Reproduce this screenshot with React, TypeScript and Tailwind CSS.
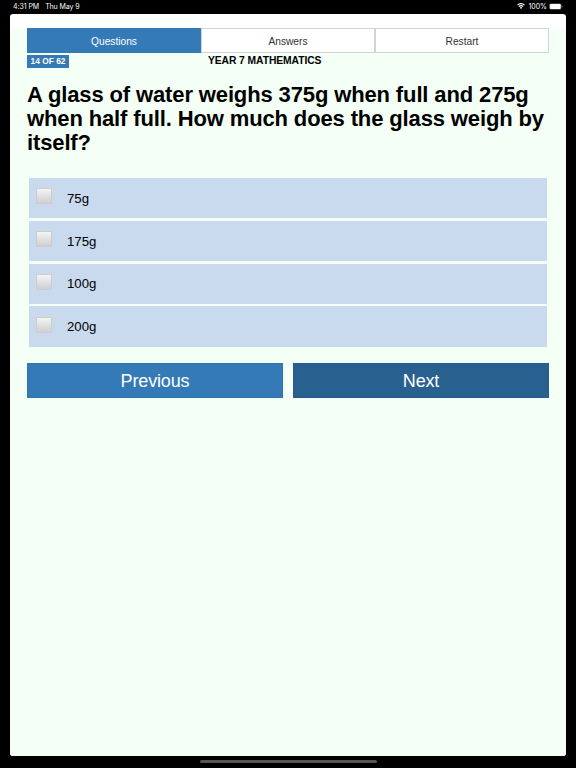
import { useState } from 'react';

const TABS = ['Questions', 'Answers', 'Restart'];

const OPTIONS = ['75g', '175g', '100g', '200g'];

function WifiIcon() {
  return (
    <svg viewBox="0 0 16 12" className="w-[8px] h-[6px]" fill="none" stroke="#fff" strokeWidth="2.4">
      <path d="M1 4.2a10 10 0 0 1 14 0" />
      <path d="M3.7 7.2a6.2 6.2 0 0 1 8.6 0" />
      <path d="M8 11.8L5.6 9.4a3.2 3.2 0 0 1 4.8 0z" fill="#fff" stroke="none" />
    </svg>
  );
}

function BatteryIcon() {
  return (
    <svg viewBox="0 0 14 7" className="w-[14px] h-[7px]">
      <rect x="0.3" y="0.5" width="12" height="6" rx="1.7" fill="none" stroke="#777" strokeWidth="0.5" />
      <rect x="0.8" y="1" width="11" height="5" rx="1.2" fill="#fff" />
      <path d="M13 2.5v2q.8-.4.8-1t-.8-1z" fill="#777" />
    </svg>
  );
}

export default function App() {
  const [tab, setTab] = useState('Questions');
  const [checked, setChecked] = useState('');

  return (
    <div className="h-[768px] w-[576px] overflow-hidden bg-black flex flex-col text-black font-['Liberation_Sans',Arial,sans-serif]">

      {/* status bar */}
      <div className="h-[14px] shrink-0 flex items-start justify-between pl-[13px] pr-[13px] text-white text-[7px] leading-[13px] font-['Inter',sans-serif]">
        <div className="flex gap-[6px]">
          <span className="tracking-[-0.05px]">4:31 PM</span>
          <span className="tracking-[-0.1px]">Thu May 9</span>
        </div>
        <div className="flex items-center h-[12px]">
          <WifiIcon />
          <span className="ml-[3px] mr-[2px]">100%</span>
          <BatteryIcon />
        </div>
      </div>

      {/* page */}
      <div className="ml-[10px] w-[556px] h-[742px] shrink-0 rounded-[3px] bg-white overflow-hidden flex flex-col">
        <div className="h-[14px] shrink-0" />
        <div className="flex-1 bg-[#f4fff5] px-[17px]">

          <div className="grid grid-cols-3 h-[25px]">
            {TABS.map(name => (
              <button
                key={name}
                onClick={() => setTab(name)}
                className={
                  tab === name
                    ? 'bg-[#337ab7] text-white text-[10.2px] pt-[2px] border border-[#337ab7]'
                    : 'bg-white text-[#333] text-[10.2px] pt-[2px] border border-[#d3d3d3]'
                }
              >
                {name}
              </button>
            ))}
          </div>

          <div className="flex items-start h-[16px]">
            <span className="mt-[2px] w-[42px] h-[13px] bg-[#337ab7] text-white text-[8.4px] leading-[13px] font-bold text-center whitespace-nowrap">
              14 OF 62
            </span>
            <span className="ml-[139px] text-[10.3px] leading-[15px] tracking-[-0.07px] font-bold whitespace-nowrap">YEAR 7 MATHEMATICS</span>
          </div>

          <h1 className="mt-[14px] text-[22px] leading-[24px] tracking-[-0.13px] font-bold whitespace-nowrap">
            A glass of water weighs 375g when full and 275g<br />
            when half full. How much does the glass weigh by<br />
            itself?
          </h1>

          <div className="mt-[23px] mx-[2px] flex flex-col gap-[2.4px]">
            {OPTIONS.map(option => (
              <button
                key={option}
                onClick={() => setChecked(option)}
                className="h-[40.4px] bg-[#c9d9ee] flex items-center pl-[7px] text-[13.2px] text-left"
              >
                <span
                  className={
                    checked === option
                      ? 'size-[16px] mb-[4px] border border-[#337ab7] bg-[#337ab7]'
                      : 'size-[16px] mb-[4px] border border-[#ccc] bg-linear-to-b from-[#f4f4f4] to-[#cfcfcf]'
                  }
                />
                <span className="ml-[15px] pt-px">{option}</span>
              </button>
            ))}
          </div>

          <div className="mt-[16px] grid grid-cols-2 gap-[10px] text-white text-[18px] tracking-[-0.15px]">
            <button className="h-[35px] pt-[2px] bg-[#337ab7] border border-[#2e6da4]/40">Previous</button>
            <button className="h-[35px] pt-[2px] bg-[#286090] border border-[#245682]/40">Next</button>
          </div>

        </div>
      </div>

      {/* home indicator */}
      <div className="mt-[4px] mx-auto w-[177px] h-[3px] rounded-full bg-[#555]" />
    </div>
  );
}
